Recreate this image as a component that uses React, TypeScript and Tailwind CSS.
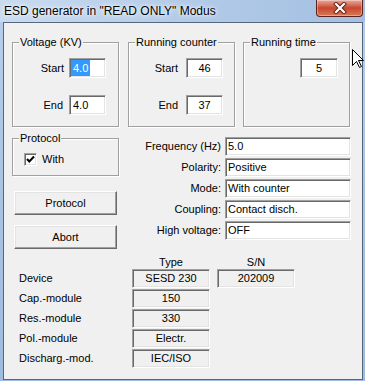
import React from "react";

const sunkenWhite =
  "bg-white border border-t-[#a0a0a0] border-l-[#a0a0a0] border-b-white border-r-white shadow-[inset_1px_1px_0_#696969,inset_-1px_-1px_0_#e3e3e3]";
const sunkenGray =
  "bg-[#f0f0f0] border border-t-[#a0a0a0] border-l-[#a0a0a0] border-b-white border-r-white shadow-[inset_1px_1px_0_#696969,inset_-1px_-1px_0_#e3e3e3]";
const button =
  "bg-[#f0f0f0] border border-t-white border-l-white border-b-[#696969] border-r-[#696969] shadow-[inset_-1px_-1px_0_#a0a0a0,inset_1px_1px_0_#e3e3e3] flex items-center justify-center";

function Group({
  label,
  className,
  children,
}: {
  label: string;
  className: string;
  children?: React.ReactNode;
}) {
  return (
    <div
      className={`relative border border-[#a0a0a0] shadow-[inset_1px_1px_0_#ffffff,1px_1px_0_#ffffff] ${className}`}
    >
      <span className="absolute -top-[7px] left-[6px] bg-[#f0f0f0] px-[1px] leading-[13px] whitespace-nowrap">
        {label}
      </span>
      {children}
    </div>
  );
}

function Field({ label, value }: { label: string; value: string }) {
  return (
    <div className="flex items-center justify-end gap-[4px] h-[19px]">
      <span className="leading-[13px] whitespace-nowrap">{label}</span>
      <div className={`${sunkenWhite} w-[126px] h-[19px] pl-[2px] flex items-center leading-[13px]`}>
        {value}
      </div>
    </div>
  );
}

function InfoRow({ label, type, sn }: { label: string; type: string; sn?: string }) {
  return (
    <div className="flex items-center h-[19px]">
      <span className="w-[113px] leading-[13px] whitespace-nowrap">{label}</span>
      <div className={`${sunkenGray} w-[78px] h-[19px] flex items-center justify-center leading-[13px]`}>
        {type}
      </div>
      {sn !== undefined && (
        <div className={`${sunkenGray} ml-[7px] w-[78px] h-[19px] flex items-center justify-center leading-[13px]`}>
          {sn}
        </div>
      )}
    </div>
  );
}

export default function App() {
  return (
    <div className="relative w-[365px] h-[381px] overflow-hidden bg-gradient-to-b from-[#b7cfea] via-[#a9c3e3] to-[#9fbbdf] font-[family-name:'Liberation_Sans',Arial,sans-serif] text-[11px] text-black">
      {/* Title bar */}
      <div className="h-[22px] flex items-center pl-[4px] text-[12px] leading-[14px] text-black bg-gradient-to-r from-[#c9dbef] via-[#b3cbe8] to-[#a4bfe2]">
        <span className="[text-shadow:0_0_6px_#ffffff,0_0_3px_#ffffff]">ESD generator in &quot;READ ONLY&quot; Modus</span>
      </div>
      {/* Close button */}
      <div className="absolute top-0 right-[2px] w-[47px] h-[17px] rounded-b-[4px] border border-t-0 border-[#5b231b] bg-gradient-to-b from-[#e9a99b] via-[#c8452e] to-[#d67a55] shadow-[inset_0_0_0_1px_rgba(255,255,255,0.35)] flex items-center justify-center">
        <svg width="14" height="12" viewBox="0 0 14 12">
          <path d="M3 2 L11 10 M11 2 L3 10" stroke="#5a1a12" strokeWidth="4" strokeLinecap="square" />
          <path d="M3 2 L11 10 M11 2 L3 10" stroke="#ffffff" strokeWidth="2.2" strokeLinecap="square" />
        </svg>
      </div>

      {/* Client area */}
      <div className="ml-[3px] w-[360px] h-[358px] border border-[#56677d] bg-[#f0f0f0]">
        {/* Row 1 */}
        <div className="flex pl-[8px] mt-[19px]">
          <Group label="Voltage (KV)" className="w-[107px] h-[85px]">
            <div className="flex flex-col pr-[12px] pt-[15px]">
              <div className="flex items-center justify-end gap-[5px]">
                <span>Start</span>
                <div className={`${sunkenWhite} w-[37px] h-[20px] flex items-center pl-[1px]`}>
                  <span className="bg-[#3399ff] text-white px-[2px] leading-[16px]">4.0</span>
                </div>
              </div>
              <div className="flex items-center justify-end gap-[6px] mt-[17px]">
                <span>End</span>
                <div className={`${sunkenWhite} w-[37px] h-[20px] flex items-center pl-[3px]`}>4.0</div>
              </div>
            </div>
          </Group>
          <Group label="Running counter" className="w-[107px] h-[85px] ml-[9px]">
            <div className="flex flex-col pr-[11px] pt-[15px]">
              <div className="flex items-center justify-end gap-[8px]">
                <span>Start</span>
                <div className={`${sunkenWhite} w-[37px] h-[20px] flex items-center justify-center`}>46</div>
              </div>
              <div className="flex items-center justify-end gap-[8px] mt-[17px]">
                <span>End</span>
                <div className={`${sunkenWhite} w-[37px] h-[20px] flex items-center justify-center`}>37</div>
              </div>
            </div>
          </Group>
          <Group label="Running time" className="w-[107px] h-[85px] ml-[8px]">
            <div className="flex justify-end pr-[11px] pt-[15px]">
              <div className={`${sunkenWhite} w-[38px] h-[20px] flex items-center justify-center`}>5</div>
            </div>
          </Group>
        </div>

        {/* Row 2 */}
        <div className="flex pl-[8px] pr-[11px] mt-[10px]">
          <div className="w-[107px] pt-[1px] flex flex-col">
            <Group label="Protocol" className="h-[38px]">
              <div className="flex items-center ml-[11px] mt-[14px] gap-[5px]">
                <div className={`${sunkenWhite} w-[13px] h-[13px] flex items-center justify-center`}>
                  <svg width="9" height="9" viewBox="0 0 9 9">
                    <path d="M1 4 L3.3 6.5 L8 1.5" fill="none" stroke="#000" strokeWidth="2" />
                  </svg>
                </div>
                <span className="leading-[13px]">With</span>
              </div>
            </Group>
            <div className={`${button} ml-[2px] w-[103px] h-[24px] mt-[15px]`}>Protocol</div>
            <div className={`${button} ml-[2px] w-[103px] h-[24px] mt-[10px]`}>Abort</div>
          </div>
          <div className="flex-1 flex flex-col gap-[2px]">
            <Field label="Frequency (Hz)" value="5.0" />
            <Field label="Polarity:" value="Positive" />
            <Field label="Mode:" value="With counter" />
            <Field label="Coupling:" value="Contact disch." />
            <Field label="High voltage:" value="OFF" />
          </div>
        </div>

        {/* Bottom section */}
        <div className="pl-[15px] mt-[7px] flex flex-col">
          <div className="flex h-[13px] items-center leading-[13px]">
            <span className="w-[113px]" />
            <span className="w-[78px] text-center">Type</span>
            <span className="w-[78px] ml-[7px] text-center">S/N</span>
          </div>
          <div className="flex flex-col gap-[1px]">
            <InfoRow label="Device" type="SESD 230" sn="202009" />
            <InfoRow label="Cap.-module" type="150" />
            <InfoRow label="Res.-module" type="330" />
            <InfoRow label="Pol.-module" type="Electr." />
            <InfoRow label="Discharg.-mod." type="IEC/ISO" />
          </div>
        </div>
      </div>

      {/* Mouse cursor */}
      <svg className="absolute left-[352px] top-[49px]" width="13" height="20" viewBox="0 0 13 20">
        <path
          d="M0.5 0.5 L0.5 16.5 L4.5 12.5 L7.5 18.5 L9.5 17.5 L6.5 11.5 L11.5 11.5 Z"
          fill="#ffffff"
          stroke="#000000"
          strokeWidth="1"
        />
      </svg>
    </div>
  );
}
